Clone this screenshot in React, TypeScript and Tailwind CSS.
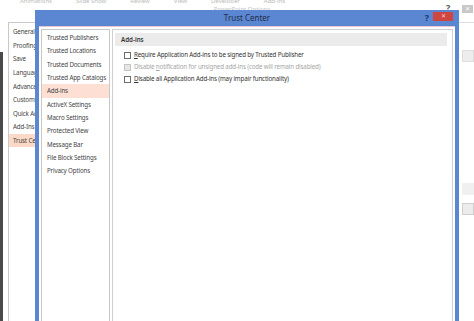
const optionsNav = [
  "General",
  "Proofing",
  "Save",
  "Language",
  "Advanced",
  "Customize Ribbon",
  "Quick Access Toolbar",
  "Add-Ins",
  "Trust Center",
];

const trustNav = [
  "Trusted Publishers",
  "Trusted Locations",
  "Trusted Documents",
  "Trusted App Catalogs",
  "Add-ins",
  "ActiveX Settings",
  "Macro Settings",
  "Protected View",
  "Message Bar",
  "File Block Settings",
  "Privacy Options",
];

const Check = ({ disabled = false }: { disabled?: boolean }) => (
  <span
    className={
      disabled
        ? "w-[7px] h-[7px] shrink-0 border border-[#c4c4c4] bg-[#e6e6e6]"
        : "w-[7px] h-[7px] shrink-0 border border-[#6d6d6d] bg-white"
    }
  />
);

export default function App() {
  return (
    <div
      className="relative w-[474px] h-[321px] overflow-hidden bg-white text-[#444]"
      style={{ fontFamily: '"Noto Sans", "Open Sans", sans-serif' }}
    >
      {/* options window behind */}
      <div className="flex flex-col h-full">
        <div className="h-[3px] flex gap-6 pl-[20px] text-[6px] leading-[2px] text-[#bbb] overflow-hidden">
          <span>Animations</span>
          <span>Slide Show</span>
          <span>Review</span>
          <span>View</span>
          <span>Developer</span>
          <span>Add-ins</span>
        </div>
        <div className="h-[19px] flex justify-center pt-[2px] text-[6px] text-[#c4c4c4]">
          <span className="ml-[10px]">PowerPoint Options</span>
        </div>
        <div className="flex flex-1">
          <div className="w-[3px] bg-[#4a4a4a] mt-[30px]" />
          <div className="w-[5px]" />
          <div className="w-[27px] overflow-hidden border-l border-t border-[#c9c9c9] pt-[2px] flex flex-col">
            {optionsNav.map((n) => (
              <div
                key={n}
                className={
                  n === "Trust Center"
                    ? "h-[13.6px] flex items-center pl-[4px] text-[6.2px] tracking-[-0.15px] whitespace-nowrap bg-[#fbd9c6]"
                    : "h-[13.6px] flex items-center pl-[4px] text-[6.2px] tracking-[-0.15px] whitespace-nowrap"
                }
              >
                {n}
              </div>
            ))}
          </div>
        </div>
      </div>

      {/* behind window title controls, right side */}
      <div className="absolute top-[1px] left-[446px] text-[9px] font-bold text-[#555]">?</div>
      <div className="absolute top-[5px] left-[462px] w-[11px] h-[8px] bg-[#c8c8c8] flex items-center justify-center text-[6px] text-white">
        ✕
      </div>
      <div className="absolute top-[22px] left-[459px] w-[15px] border-t border-[#dcdcdc]" />
      <div className="absolute top-[50px] left-[462px] w-[12px] h-[12px] bg-[#ededed] border border-[#dedede]" />
      <div className="absolute top-[183px] left-[462px] w-[12px] h-[12px] bg-[#f0f0f0]" />
      <div className="absolute top-[203px] left-[462px] w-[12px] h-[12px] bg-[#ececec] border border-[#cfcfcf]" />

      {/* Trust Center dialog */}
      <div className="absolute left-[35px] top-[10px] w-[424px] h-[320px] bg-[#5b87d2] flex flex-col px-[4px]">
        <div className="h-[16px] relative flex items-center justify-center text-[8px] text-[#1f2d4a]">
          Trust Center
          <span className="absolute right-[26px] top-[1px] text-[9px] font-bold text-[#1e3770]">?</span>
          <span className="absolute right-[2px] top-[2px] w-[20px] h-[9px] bg-[#cf4540] flex items-center justify-center text-[6px] text-[#fbd0d0]">
            ✕
          </span>
        </div>
        <div className="flex-1 bg-white border-t border-[#e8c8d0] flex gap-[2px] pl-[2px] pr-[2px] pt-[2px]">
          <div className="w-[69px] border border-[#c8c8c8] border-b-0 flex flex-col pt-[1px]">
            {trustNav.map((n) => (
              <div
                key={n}
                className={
                  n === "Add-ins"
                    ? "h-[13.33px] flex items-center pl-[5px] text-[6.2px] tracking-[-0.15px] whitespace-nowrap bg-[#fde0d3]"
                    : "h-[13.33px] flex items-center pl-[5px] text-[6.2px] tracking-[-0.15px] whitespace-nowrap"
                }
              >
                {n}
              </div>
            ))}
          </div>
          <div className="flex-1 border border-[#cfcfcf] border-b-0 pl-[2px] pr-[5px] pt-[3px]">
            <div className="h-[13px] bg-[#ebebeb] flex items-center pl-[6px] text-[6.2px] font-semibold text-[#333]">
              Add-ins
            </div>
            <div className="flex flex-col pl-[9px] pt-[3px] text-[6.2px] tracking-[-0.15px]">
              <div className="h-[12px] flex items-center gap-[3px] text-[#333]">
                <Check />
                <span>
                  <span className="underline">R</span>equire Application Add-ins to be signed by Trusted Publisher
                </span>
              </div>
              <div className="h-[12px] flex items-center gap-[3px] text-[#a6a6a6]">
                <Check disabled />
                <span>
                  Disable <span className="underline">n</span>otification for unsigned add-ins (code will remain disabled)
                </span>
              </div>
              <div className="h-[12px] flex items-center gap-[3px] text-[#333]">
                <Check />
                <span>
                  <span className="underline">D</span>isable all Application Add-ins (may impair functionality)
                </span>
              </div>
            </div>
          </div>
        </div>
      </div>
    </div>
  );
}
